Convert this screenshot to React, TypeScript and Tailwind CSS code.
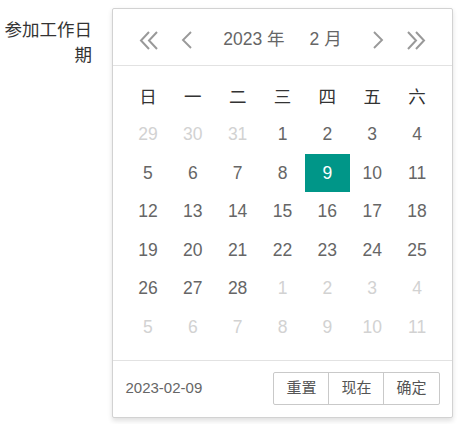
import React from "react";

type Day = { n: number; muted: boolean; selected?: boolean };

const weekdays = ["日", "一", "二", "三", "四", "五", "六"];

function buildDays(): Day[] {
  const days: Day[] = [];
  [29, 30, 31].forEach((n) => days.push({ n, muted: true }));
  for (let n = 1; n <= 28; n++) days.push({ n, muted: false, selected: n === 9 });
  for (let n = 1; days.length < 42; n++) days.push({ n, muted: true });
  return days;
}

function DoubleChevron({ flip }: { flip?: boolean }) {
  return (
    <svg
      width="20"
      height="19"
      viewBox="0 0 20 19"
      fill="none"
      stroke="#999"
      strokeWidth="2"
      className={flip ? "-scale-x-100" : ""}
    >
      <polyline points="10,1 2,9.5 10,18" />
      <polyline points="18,1 10,9.5 18,18" />
    </svg>
  );
}

function Chevron({ flip }: { flip?: boolean }) {
  return (
    <svg
      width="11"
      height="18"
      viewBox="0 0 11 18"
      fill="none"
      stroke="#999"
      strokeWidth="1.9"
      className={flip ? "-scale-x-100" : ""}
    >
      <polyline points="10,1 2,9 10,17" />
    </svg>
  );
}

export default function App() {
  const days = buildDays();
  const rows: Day[][] = [];
  for (let i = 0; i < days.length; i += 7) rows.push(days.slice(i, i + 7));

  return (
    <div className="min-h-screen bg-white font-['Liberation_Sans','Noto_Sans_CJK_SC',sans-serif]">
      <div className="flex items-start">
        {/* form label */}
        <div className="w-[92px] pl-[2px] pt-[18px] text-right text-[17.5px] leading-[25px] text-[#333]">
          参加工作日期
        </div>

        {/* date picker panel */}
        <div className="ml-[20px] mt-[8px] w-[341px] rounded-[2px] border border-[#d2d2d2] bg-white text-[#666] shadow-[0_2.5px_5px_rgba(0,0,0,0.12)]">
          <div className="flex h-[57px] items-center border-b border-[#e2e2e2] px-[26px] pt-[6px]">
            <DoubleChevron />
            <div className="ml-[22px]">
              <Chevron />
            </div>
            <div className="flex flex-1 justify-center whitespace-nowrap text-[17.5px] leading-[37.5px]">
              <span className="px-[12.5px]">2023 年</span>
              <span className="px-[12.5px]">2 月</span>
            </div>
            <div className="mr-[22px]">
              <Chevron flip />
            </div>
            <DoubleChevron flip />
          </div>

          <div className="px-[12.5px] pt-[12.5px] pb-[13.5px] text-[17.5px]">
            <div className="grid h-[36.5px] grid-cols-7 items-center text-[#333]">
              {weekdays.map((w) => (
                <div key={w} className="text-center">
                  {w}
                </div>
              ))}
            </div>
            {rows.map((row, i) => (
              <div key={i} className="grid h-[38.5px] grid-cols-7">
                {row.map((d, j) => (
                  <div
                    key={j}
                    className={
                      "flex items-center justify-center " +
                      (d.selected
                        ? "bg-[#009688] text-white"
                        : d.muted
                        ? "text-[#d2d2d2]"
                        : "text-[#666]")
                    }
                  >
                    {d.n}
                  </div>
                ))}
              </div>
            ))}
          </div>

          <div className="flex h-[57px] items-center justify-between border-t border-[#e2e2e2] px-[12.5px]">
            <span className="text-[15px] text-[#666]">2023-02-09</span>
            <div className="flex text-[15px] text-[#555]">
              <span className="h-[32.5px] rounded-l-[2px] border border-[#c9c9c9] px-[12px] leading-[30.5px]">
                重置
              </span>
              <span className="-ml-px h-[32.5px] border border-[#c9c9c9] px-[12px] leading-[30.5px]">
                现在
              </span>
              <span className="-ml-px h-[32.5px] rounded-r-[2px] border border-[#c9c9c9] px-[12px] leading-[30.5px]">
                确定
              </span>
            </div>
          </div>
        </div>
      </div>
    </div>
  );
}
